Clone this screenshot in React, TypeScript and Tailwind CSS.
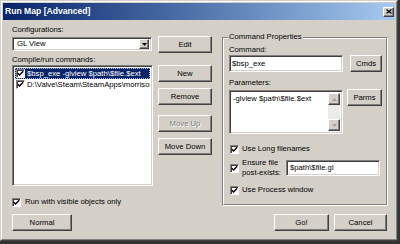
import React from 'react';

const raised =
  'border border-t-white border-l-white border-r-[#404040] border-b-[#404040] shadow-[inset_-1px_-1px_#808080] bg-[#d4d0c8]';
const sunken =
  'border border-t-[#808080] border-l-[#808080] border-r-white border-b-white shadow-[inset_1px_1px_#404040,inset_-1px_-1px_#d4d0c8] bg-white';

const Btn = ({ label, w, disabled }: { label: string; w: string; disabled?: boolean }) => (
  <div
    className={`${raised} ${w} h-[17px] shrink-0 flex items-center justify-center text-[7.7px] leading-none ${
      disabled ? 'text-[#808080] [text-shadow:1px_1px_0_#fff]' : 'text-black'
    }`}
  >
    {label}
  </div>
);

const Check = () => (
  <span className="w-[9px] h-[9px] shrink-0 bg-white border border-t-[#808080] border-l-[#808080] border-r-white border-b-white shadow-[inset_1px_1px_#404040] flex items-center justify-center">
    <svg width="7" height="7" viewBox="0 0 7 7">
      <path d="M0.8 3.2 L2.6 5 L6.2 1.2" stroke="#000" strokeWidth="1.4" fill="none" />
    </svg>
  </span>
);

const Arrow = ({ up, color }: { up?: boolean; color: string }) => (
  <svg width="5" height="3" viewBox="0 0 5 3">
    <path d={up ? 'M0 3 L2.5 0 L5 3 Z' : 'M0 0 L5 0 L2.5 3 Z'} fill={color} />
  </svg>
);

const Label = ({ children, className = '' }: { children: React.ReactNode; className?: string }) => (
  <div className={`h-[10px] leading-[10px] text-[7.7px] text-black whitespace-nowrap ${className}`}>{children}</div>
);

export default function App() {
  return (
    <div className="w-[400px] h-[244px] bg-[#333333] overflow-hidden font-[family-name:'Liberation_Sans',Arial,sans-serif]">
      <div className="w-[398px] h-[241px] flex border border-t-[#d4d0c8] border-l-[#d4d0c8] border-r-[#404040] border-b-[#404040] bg-[#d4d0c8]">
        <div className="flex-1 flex flex-col p-px border border-t-white border-l-white border-r-[#808080] border-b-[#808080]">
          {/* title bar */}
          <div className="h-[17px] shrink-0 flex items-center pl-[2px] pr-px bg-linear-to-r from-[#0a246a] to-[#a6caf0]">
            <span className="text-white font-bold text-[8.6px] leading-none">Run Map [Advanced]</span>
            <div className={`${raised} ml-auto w-[11px] h-[10px] flex items-center justify-center`}>
              <svg width="6" height="5" viewBox="0 0 6 5">
                <path d="M0.5 0.5 L5.5 4.5 M5.5 0.5 L0.5 4.5" stroke="#000" strokeWidth="1.3" />
              </svg>
            </div>
          </div>

          <div className="flex pl-[9px]">
            {/* left column */}
            <div className="w-[200px] flex flex-col">
              <Label className="mt-[5px]">Configurations:</Label>
              <div className="mt-px flex items-start">
                <div className={`${sunken} mt-px w-[140px] h-[14px] flex items-center p-[2px]`}>
                  <span className="flex-1 pl-[2px] text-[7.7px] leading-none">GL View</span>
                  <div className={`${raised} w-[10px] h-[10px] flex items-center justify-center`}>
                    <Arrow color="#000" />
                  </div>
                </div>
                <div className="ml-[6px]">
                  <Btn label="Edit" w="w-[54px]" />
                </div>
              </div>
              <Label className="mt-[2px]">Compile/run commands:</Label>
              <div className="flex items-start">
                <div className={`${sunken} w-[141px] h-[121px] p-[2px] flex flex-col overflow-hidden`}>
                  <div className="h-[11px] flex items-center bg-[#0a246a] outline outline-dotted outline-[#a6b8e0] -outline-offset-1">
                    <span className="ml-px">
                      <Check />
                    </span>
                    <span className="ml-[2px] text-white text-[7.7px] leading-none whitespace-nowrap">
                      $bsp_exe -glview $path\$file.$ext
                    </span>
                  </div>
                  <div className="h-[11px] flex items-center overflow-hidden">
                    <span className="ml-px">
                      <Check />
                    </span>
                    <span className="ml-[2px] text-black text-[7.7px] leading-none whitespace-nowrap">
                      D:\Valve\Steam\SteamApps\morrisor
                    </span>
                  </div>
                </div>
                <div className="ml-[5px] flex flex-col">
                  <Btn label="New" w="w-[54px]" />
                  <div className="mt-[6px]">
                    <Btn label="Remove" w="w-[54px]" />
                  </div>
                  <div className="mt-[10px]">
                    <Btn label="Move Up" w="w-[54px]" disabled />
                  </div>
                  <div className="mt-[6px]">
                    <Btn label="Move Down" w="w-[54px]" />
                  </div>
                </div>
              </div>
              <div className="mt-[11px] h-[10px] flex items-center gap-[4px]">
                <Check />
                <span className="text-[7.7px] leading-none">Run with visible objects only</span>
              </div>
              <div className="mt-[7px]">
                <Btn label="Normal" w="w-[60px]" />
              </div>
            </div>

            {/* right column */}
            <div className="ml-[10px] w-[166px] flex flex-col">
              <div className="relative mt-[17px] h-[169px] border border-t-[#808080] border-l-[#808080] border-r-white border-b-white">
                <span className="absolute -top-[6px] left-[5px] px-px bg-[#d4d0c8] text-[7.7px] leading-[10px]">
                  Command Properties
                </span>
                <div className="h-full flex flex-col pl-[5px] border border-t-white border-l-white border-r-[#808080] border-b-[#808080]">
                  <Label className="mt-[6px]">Command:</Label>
                  <div className="flex items-start">
                    <div className={`${sunken} w-[114px] h-[17px] flex items-center pl-[2px]`}>
                      <span className="text-[7.7px] leading-none">$bsp_exe</span>
                    </div>
                    <div className="ml-[7px]">
                      <Btn label="Cmds" w="w-[32px]" />
                    </div>
                  </div>
                  <Label className="mt-[6px]">Parameters:</Label>
                  <div className="mt-px flex items-start">
                    <div className={`${sunken} mt-px w-[114px] h-[44px] flex p-[2px]`}>
                      <span className="flex-1 pt-[2px] pl-px text-[7.7px] leading-none whitespace-nowrap">
                        -glview $path\$file.$ext
                      </span>
                      <div className="w-[12px] flex flex-col bg-[#ecebe8]">
                        <div className={`${raised} h-[12px] flex items-center justify-center`}>
                          <Arrow up color="#a0a0a0" />
                        </div>
                        <div className="flex-1" />
                        <div className={`${raised} h-[12px] flex items-center justify-center`}>
                          <Arrow color="#a0a0a0" />
                        </div>
                      </div>
                    </div>
                    <div className="ml-[4px]">
                      <Btn label="Parms" w="w-[35px]" />
                    </div>
                  </div>
                  <div className="mt-[10px] h-[10px] flex items-center gap-[3px] pl-px">
                    <Check />
                    <span className="text-[7.7px] leading-none">Use Long filenames</span>
                  </div>
                  <div className="mt-[4px] h-[20px] flex items-center pl-px">
                    <Check />
                    <div className="ml-[3px] w-[44px] text-[7.7px] leading-[10px]">
                      <div>Ensure file</div>
                      <div>post-exists:</div>
                    </div>
                    <div className={`${sunken} w-[94px] h-[16px] flex items-center pl-[3px]`}>
                      <span className="text-[7.7px] leading-none">$path\$file.gl</span>
                    </div>
                  </div>
                  <div className="mt-[7px] h-[10px] flex items-center gap-[3px] pl-px">
                    <Check />
                    <span className="text-[7.7px] leading-none">Use Process window</span>
                  </div>
                </div>
              </div>
              <div className="mt-[8px] flex justify-end gap-[5px] pr-px">
                <Btn label="Go!" w="w-[55px]" />
                <Btn label="Cancel" w="w-[53px]" />
              </div>
            </div>
          </div>
        </div>
      </div>
    </div>
  );
}
